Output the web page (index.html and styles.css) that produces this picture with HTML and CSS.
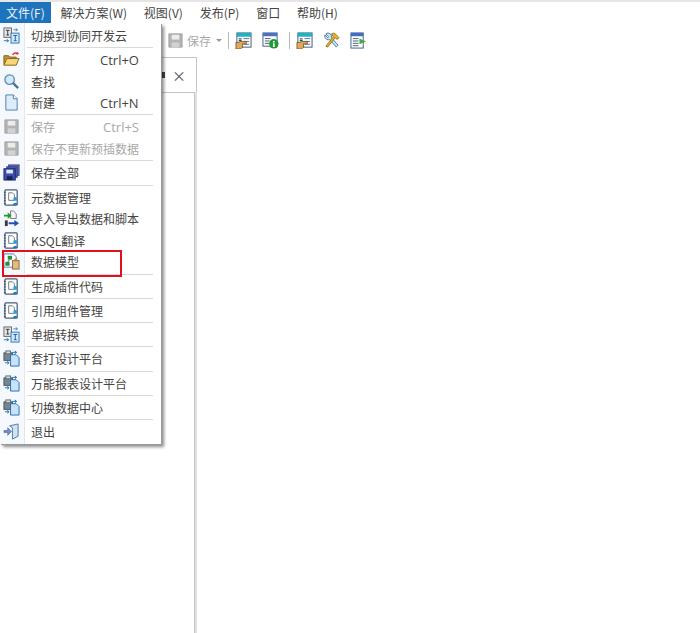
FILE: index.html

```html
<!DOCTYPE html>
<html lang="zh-CN">
<head>
  <meta charset="UTF-8">
  <title>BOS</title>
  <link rel="stylesheet" href="styles.css">
</head>
<body>

  <svg class="icon-defs" aria-hidden="true">
    <symbol id="i-switch" viewBox="0 0 18 18">
      <rect x="1" y="1" width="8" height="10" fill="#e8e8e8" stroke="#666"/>
      <path d="M3 3.500h4M5 3.500v5M3.500 8.500h3" stroke="#333" fill="none"/>
      <rect x="8.500" y="6.500" width="8.500" height="10.500" fill="#d5e8f8" stroke="#2b78b8"/>
      <path d="M11 9h4M13 9v5.500M11.500 14.500h3" stroke="#1d5f9a" fill="none"/>
      <path d="M11 3h4M13.500 1.500l2 1.500-2 1.500" stroke="#3a8ad0" fill="none"/>
      <path d="M1 14.500h5M4 13l2 1.500-2 1.500" stroke="#2b78b8" fill="none"/>
    </symbol>
    <symbol id="i-open" viewBox="0 0 18 18">
      <path d="M1 5h5l1 1.500h7v8H1z" fill="#c9962f" stroke="#7b5a14"/>
      <path d="M1 15l3-7h13l-3 7z" fill="#f7d67a" stroke="#8a6718"/>
      <path d="M10 4q3-3 6-1" stroke="#d9362b" stroke-width="1.600" fill="none"/>
      <path d="M15 1l2 2-3 1z" fill="#d9362b"/>
    </symbol>
    <symbol id="i-search" viewBox="0 0 18 18">
      <circle cx="7" cy="7" r="5" fill="#d5e9f8" stroke="#5c8db5" stroke-width="1.400"/>
      <path d="M10.500 10.500l5.500 5.500" stroke="#46729a" stroke-width="2.400"/>
    </symbol>
    <symbol id="i-new" viewBox="0 0 18 18">
      <path d="M3 1h8l4 4v12H3z" fill="#dcecfa" stroke="#4d7ea8"/>
      <path d="M11 1v4h4" fill="#fff" stroke="#4d7ea8"/>
    </symbol>
    <symbol id="i-save" viewBox="0 0 18 18">
      <path d="M2 2h14v14H2z" fill="#b4b4b4" stroke="#a2a2a2"/>
      <rect x="5" y="3" width="8" height="5" fill="#ececec"/>
      <rect x="5" y="11" width="8" height="5" fill="#d2d2d2"/>
    </symbol>
    <symbol id="i-saveall" viewBox="0 0 18 18">
      <rect x="6" y="1" width="11" height="11" fill="#6f7fc0" stroke="#2c3a80"/>
      <rect x="4" y="3" width="11" height="11" fill="#5566b0" stroke="#2c3a80"/>
      <rect x="1" y="5" width="12" height="12" fill="#3c4ea5" stroke="#1d2a70"/>
      <rect x="3.500" y="6" width="7" height="4" fill="#dfe6f7"/>
      <rect x="4" y="13" width="6" height="4" fill="#16205c"/>
    </symbol>
    <symbol id="i-book" viewBox="0 0 18 18">
      <rect x="2" y="1" width="13" height="16" rx="1" fill="#fff" stroke="#4a5f72" stroke-width="1.300"/>
      <path d="M1 3.500h2M1 6.500h2M1 9.500h2M1 12.500h2M1 15.500h2" stroke="#30465a"/>
      <path d="M6 4h4l2 2v6H6z" fill="#fff" stroke="#657786"/>
      <circle cx="13" cy="10.500" r="2" fill="#2f9bd8"/>
      <path d="M10 17q3-5 6 0z" fill="#1b7dbd"/>
    </symbol>
    <symbol id="i-import" viewBox="0 0 18 18">
      <path d="M8 1h3l3 3v5H8z" fill="#f4f4f4" stroke="#777"/>
      <path d="M1 5h4V2.500l4 3.500-4 3.500V7H1z" fill="#1f9a34"/>
      <path d="M6 13h6v-2.500l5 3.500-5 3.500V15H6z" fill="#2450b8"/>
      <rect x="2" y="11" width="3" height="6" fill="#3a3a3a"/>
    </symbol>
    <symbol id="i-model" viewBox="0 0 18 18">
      <path d="M1 1h10l3 3v11H1z" fill="#fff" stroke="#5573b8"/>
      <rect x="5" y="3" width="4.500" height="4" fill="#1f9436"/>
      <rect x="2.500" y="9.500" width="4.500" height="4" fill="#1f9436"/>
      <path d="M7 7L5 9.500" stroke="#246" fill="none"/>
      <rect x="10" y="8" width="7" height="9" fill="#e0bd84" stroke="#8a6c3a"/>
      <rect x="12" y="6" width="3" height="3" fill="#b08848"/>
    </symbol>
    <symbol id="i-print" viewBox="0 0 18 18">
      <rect x="1" y="3" width="9" height="8" fill="#76858f" stroke="#48555e"/>
      <rect x="3" y="1" width="5" height="3" fill="#d5dbe0" stroke="#5e6a73"/>
      <path d="M8 5h6l3 3v9H8z" fill="#c9e2f8" stroke="#1f6fb8"/>
      <path d="M2 13.500h4M4.500 12L6.500 13.500l-2 1.500" stroke="#1f6fb8" fill="none"/>
      <path d="M10 2.500h4M12.500 1l2 1.500-2 1.500" stroke="#1f6fb8" fill="none"/>
    </symbol>
    <symbol id="i-exit" viewBox="0 0 18 18">
      <path d="M7 3l9-2v13l-6 3V5z" fill="#cfe2f4" stroke="#4e7ba6"/>
      <path d="M1 8h4V5l4 4-4 4v-3H1z" fill="#6f8fd0" stroke="#3c5a9c" stroke-width=".6"/>
    </symbol>
    <symbol id="i-form" viewBox="0 0 18 18">
      <rect x="2" y="1" width="15" height="15" fill="#fff" stroke="#3e5570"/>
      <rect x="2" y="1" width="15" height="4" fill="#1eb3c0"/>
      <path d="M4 7h3M9 7h6M9 10h6M9 13h6" stroke="#53708e"/>
      <rect x="4" y="8" width="3" height="2" fill="#2a4a66"/>
    </symbol>
    <symbol id="i-hand" viewBox="0 0 18 18">
      <use href="#i-form"/>
      <path d="M1 11h4l1-1h6v2.500H8V16l-2 2H1z" fill="#e0a95a" stroke="#6d4a18" stroke-width=".8"/>
    </symbol>
    <symbol id="i-info" viewBox="0 0 18 18">
      <rect x="1" y="1" width="15" height="14" fill="#fff" stroke="#3e5a8a"/>
      <rect x="1" y="1" width="15" height="3.500" fill="#4d72c4"/>
      <path d="M3 7h6M3 9.500h5M3 12h5" stroke="#44586f"/>
      <circle cx="12.500" cy="12.500" r="5" fill="#1f9a2c"/>
      <path d="M12.500 9.500v1.500M12.500 12v4" stroke="#fff" stroke-width="1.800"/>
    </symbol>
    <symbol id="i-tools" viewBox="0 0 18 18">
      <path d="M3 2l3 3-1 1-3-3q-1 3 2 5 2 .5 3 0l7 8 2-2-7-8q1-4-4-5z" fill="#c6e2f4" stroke="#3f6f96" stroke-width=".9"/>
      <path d="M9 2l3-1 5 5-2 2-2-2-8 10-2-1 8-10z" fill="#e8b22a" stroke="#7d5e10" stroke-width=".8"/>
    </symbol>
    <symbol id="i-arrow" viewBox="0 0 18 18">
      <rect x="1" y="1" width="13" height="16" fill="#fff" stroke="#3e5a8a"/>
      <rect x="1" y="1" width="13" height="3.500" fill="#3f6fc0"/>
      <path d="M3 7h6M3 9.500h6M3 12h6M3 14.500h6" stroke="#44586f"/>
      <path d="M10 7v6l7-3z" fill="#3fae3a"/>
    </symbol>
  </svg>

  <div class="app">
    <nav class="menubar">
      <span class="top-item active">文件(F)</span>
      <span class="top-item">解决方案(W)</span>
      <span class="top-item">视图(V)</span>
      <span class="top-item">发布(P)</span>
      <span class="top-item">窗口</span>
      <span class="top-item">帮助(H)</span>
    </nav>

    <div class="toolbar">
      <svg class="tool-icon"><use href="#i-save"/></svg>
      <span class="tool-label">保存</span>
      <span class="caret"></span>
      <span class="tool-sep"></span>
      <svg class="tool-icon"><use href="#i-hand"/></svg>
      <svg class="tool-icon"><use href="#i-info"/></svg>
      <span class="tool-sep"></span>
      <svg class="tool-icon"><use href="#i-hand"/></svg>
      <svg class="tool-icon"><use href="#i-tools"/></svg>
      <svg class="tool-icon"><use href="#i-arrow"/></svg>
    </div>

    <div class="workspace">
      <aside class="side-panel">
        <div class="side-tab">
          <span class="tab-title-end"></span>
          <span class="tab-close">×</span>
        </div>
        <div class="side-body"></div>
      </aside>
    </div>
  </div>

  <div class="file-menu">
    <div class="row"><svg class="row-icon"><use href="#i-switch"/></svg><span class="row-label">切换到协同开发云</span></div>
    <div class="sep"></div>
    <div class="row"><svg class="row-icon"><use href="#i-open"/></svg><span class="row-label">打开</span><span class="row-key">Ctrl+O</span></div>
    <div class="row"><svg class="row-icon"><use href="#i-search"/></svg><span class="row-label">查找</span></div>
    <div class="row"><svg class="row-icon"><use href="#i-new"/></svg><span class="row-label">新建</span><span class="row-key">Ctrl+N</span></div>
    <div class="sep"></div>
    <div class="row disabled"><svg class="row-icon"><use href="#i-save"/></svg><span class="row-label">保存</span><span class="row-key">Ctrl+S</span></div>
    <div class="row disabled"><svg class="row-icon"><use href="#i-save"/></svg><span class="row-label">保存不更新预插数据</span></div>
    <div class="sep"></div>
    <div class="row"><svg class="row-icon"><use href="#i-saveall"/></svg><span class="row-label">保存全部</span></div>
    <div class="sep"></div>
    <div class="row"><svg class="row-icon"><use href="#i-book"/></svg><span class="row-label">元数据管理</span></div>
    <div class="row"><svg class="row-icon"><use href="#i-import"/></svg><span class="row-label">导入导出数据和脚本</span></div>
    <div class="row"><svg class="row-icon"><use href="#i-book"/></svg><span class="row-label">KSQL翻译</span></div>
    <div class="row"><svg class="row-icon"><use href="#i-model"/></svg><span class="row-label">数据模型</span></div>
    <div class="sep"></div>
    <div class="row"><svg class="row-icon"><use href="#i-book"/></svg><span class="row-label">生成插件代码</span></div>
    <div class="sep"></div>
    <div class="row"><svg class="row-icon"><use href="#i-book"/></svg><span class="row-label">引用组件管理</span></div>
    <div class="sep"></div>
    <div class="row"><svg class="row-icon"><use href="#i-switch"/></svg><span class="row-label">单据转换</span></div>
    <div class="sep"></div>
    <div class="row"><svg class="row-icon"><use href="#i-print"/></svg><span class="row-label">套打设计平台</span></div>
    <div class="sep"></div>
    <div class="row"><svg class="row-icon"><use href="#i-print"/></svg><span class="row-label">万能报表设计平台</span></div>
    <div class="sep"></div>
    <div class="row"><svg class="row-icon"><use href="#i-print"/></svg><span class="row-label">切换数据中心</span></div>
    <div class="sep"></div>
    <div class="row"><svg class="row-icon"><use href="#i-exit"/></svg><span class="row-label">退出</span></div>
  </div>

  <!-- 红框标注 -->
  <div class="callout"></div>

</body>
</html>
```

FILE: styles.css

```css
html, body {
  height: 100%;
}

body {
  margin: 0;
  overflow: hidden;
  background-color: #fff;
  color: #444;
  font-family: "Noto Sans CJK SC", "Noto Sans", sans-serif;
  font-size: 12px;
}

.icon-defs {
  display: none;
}

.app {
  display: flex;
  flex-direction: column;
  height: 100%;
}

/* 菜单栏 */
.menubar {
  display: flex;
  align-items: stretch;
  height: 21px;
  border-top: 2px solid #e6e6e6;
  flex: none;
}

.top-item {
  display: flex;
  align-items: center;
  padding: 0 8.4px;
  color: #444;
  white-space: nowrap;
}

.top-item.active {
  width: 51px;
  box-sizing: border-box;
  margin-right: 1px;
  padding: 0 0 0 6px;
  background-color: #1e74bc;
  color: #e8f2fb;
}

/* 工具栏 */
.toolbar {
  display: flex;
  align-items: center;
  height: 34px;
  padding-left: 167px;
  flex: none;
}

.tool-icon {
  width: 17px;
  height: 17px;
  margin-right: 10px;
  flex: none;
}

.tool-label {
  color: #aaa;
  margin-left: -7px;
}

.caret {
  width: 0;
  height: 0;
  margin: 0 6px 0 5px;
  border-top: 3px solid #999;
  border-left: 3px solid transparent;
  border-right: 3px solid transparent;
}

.tool-sep {
  width: 1px;
  height: 17px;
  margin: 0 6px 0 0;
  background-color: #b9b9b9;
  flex: none;
}

/* 左侧面板 */
.workspace {
  display: flex;
  flex: 1;
  min-height: 0;
}

.side-panel {
  display: flex;
  flex-direction: column;
  width: 197px;
  flex: none;
}

.side-tab {
  display: flex;
  align-items: center;
  justify-content: flex-end;
  height: 35px;
  border-top: 1px solid #c4c4c4;
  border-right: 1px solid #c4c4c4;
  box-sizing: border-box;
  padding-right: 10px;
}

.tab-title-end {
  width: 3px;
  height: 6px;
  margin-right: 7px;
  background-color: #444;
}

.tab-close {
  font-size: 14px;
  line-height: 1;
  color: #555;
}

.side-body {
  flex: 1;
  margin-right: 2px;
  border-top: 1px solid #c4c4c4;
  border-right: 1px solid #c4c4c4;
  box-shadow: 2px 0 0 #e2e2e2;
}

/* 文件菜单 */
.file-menu {
  position: absolute;
  left: 0;
  top: 23px;
  width: 161px;
  padding: 1.5px 0 1px;
  background: linear-gradient(to right, #f5f8fc 24px, #e3e6ea 24px, #e3e6ea 25px, #fff 25px);
  box-shadow: 1px 1px 0 #9a9a9a, 3px 3px 3px rgba(0, 0, 0, 0.45);
}

.row {
  display: flex;
  align-items: center;
  height: 21.55px;
  color: #444;
}

.row-icon {
  width: 17px;
  height: 17px;
  margin: 0 10px 0 3px;
  flex: none;
}

.row-label {
  margin-left: 1px;
  flex: 1;
  white-space: nowrap;
}

.row-key {
  position: absolute;
  left: 100px;
  font-family: "Open Sans", sans-serif;
  font-size: 13px;
}

.row.disabled,
.row.disabled .row-key {
  color: #a8a8a8;
}

.row.disabled .row-key {
  left: 103px;
}

.sep {
  height: 1px;
  margin: 1px 8px 0.75px 27px;
  background-color: #d9d9d9;
}

.callout {
  position: absolute;
  left: 2px;
  top: 250px;
  width: 116px;
  height: 23px;
  border: 2px solid #e3101c;
}
```
